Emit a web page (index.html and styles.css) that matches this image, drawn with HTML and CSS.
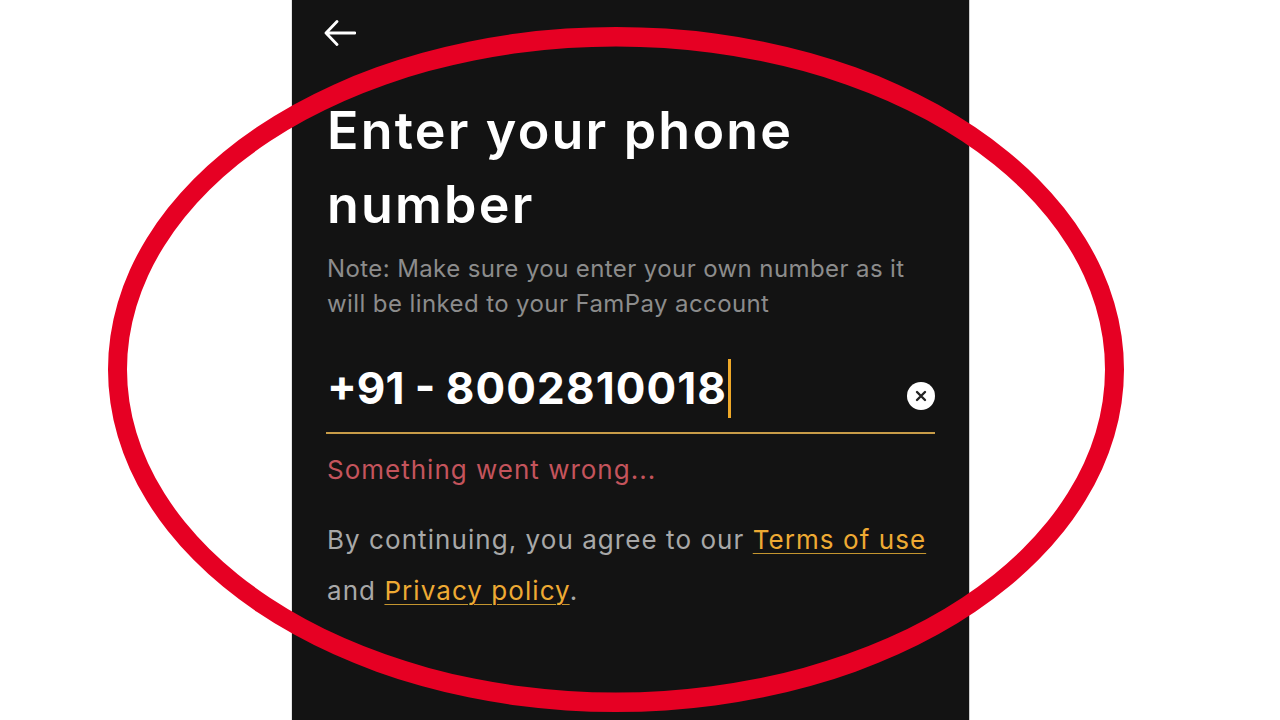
FILE: index.html
```html
<!DOCTYPE html>
<html lang="en">
<head>
<meta charset="utf-8">
<title>Enter your phone number</title>
<link rel="stylesheet" href="styles.css">
</head>
<body>
<main class="stage">
  <section class="panel">
    <svg class="back" viewBox="0 0 32 26" width="32" height="26" aria-hidden="true"><path d="M31 13H2M13 1.500 2 13l11 11.500"/></svg>
    <h1 class="title">Enter your phone number</h1>
    <p class="note">Note: Make sure you enter your own number as it will be linked to your FamPay account</p>
    <div class="field">
      <span class="phone"><span class="code">+91 - </span>8002810018</span><span class="caret"></span>
      <svg class="clear" viewBox="0 0 28 28" width="28" height="28" aria-hidden="true"><circle cx="14" cy="14" r="14" fill="#fff"/><path d="M10 10l8 8M18 10l-8 8" stroke="#222" stroke-width="2.400" stroke-linecap="round"/></svg>
    </div>
    <p class="error">Something went wrong...</p>
    <p class="terms">By continuing, you agree to our <a class="link">Terms of use</a> and <a class="link">Privacy policy</a>.</p>
  </section>
  <svg class="ring" viewBox="0 0 1280 720" width="1280" height="720" aria-hidden="true"><path fill-rule="evenodd" d="M108 369.500a508 342.500 0 1 0 1016 0a508 342.500 0 1 0-1016 0zM127 369.500a489 323 0 1 0 978 0a489 323 0 1 0-978 0z"/></svg>
</main>
</body>
</html>
```
FILE: styles.css
```css
* { box-sizing: border-box; }
html, body { margin: 0; height: 100%; background: #fff; overflow: hidden; }
.stage { position: relative; width: 1280px; height: 720px; display: flex; padding-left: 292px; font-family: Inter, "Liberation Sans", sans-serif; }
.panel { width: 677px; height: 720px; background: #131313; padding: 20px 34px 0 35px; box-shadow: 1px 0 0 #cfcfcf, -1px 0 0 #e4e4e4; }
.back { display: block; margin-left: -3px; fill: none; stroke: #fff; stroke-width: 2.800; stroke-linecap: round; stroke-linejoin: round; }
.title { margin: 48px 0 0; font-size: 52px; line-height: 74px; font-weight: 600; color: #fff; letter-spacing: 2.2px; width: 560px; }
.note { margin: 9px 0 0; font-size: 24px; line-height: 35px; color: #8c8c8c; letter-spacing: 0.4px; font-weight: 400; width: 600px; }
.field { position: relative; display: flex; align-items: center; height: 98px; margin: 15px 0 0 -1px; padding: 8px 0 0 1px; border-bottom: 2px solid #c89c48; }
.phone { font-size: 44px; font-weight: 700; color: #fff; letter-spacing: 1.1px; white-space: pre; }
.code { letter-spacing: 0; }
.caret { width: 3px; height: 59px; margin-left: 1px; background: #eea828; }
.clear { position: absolute; right: 0; top: 46px; }
.error { margin: 18px 0 0; font-size: 26px; line-height: 36px; color: #c4545c; letter-spacing: 1px; }
.terms { margin: 26px 0 0; font-size: 26px; line-height: 51px; color: #a8a8a8; letter-spacing: 1.06px; width: 608px; }
.link { color: #eeaa33; text-decoration: underline; text-decoration-color: #c4952f; text-decoration-thickness: 1px; text-underline-offset: 4px; }
.ring { position: absolute; left: 0; top: 0; fill: #e60023; }
```
